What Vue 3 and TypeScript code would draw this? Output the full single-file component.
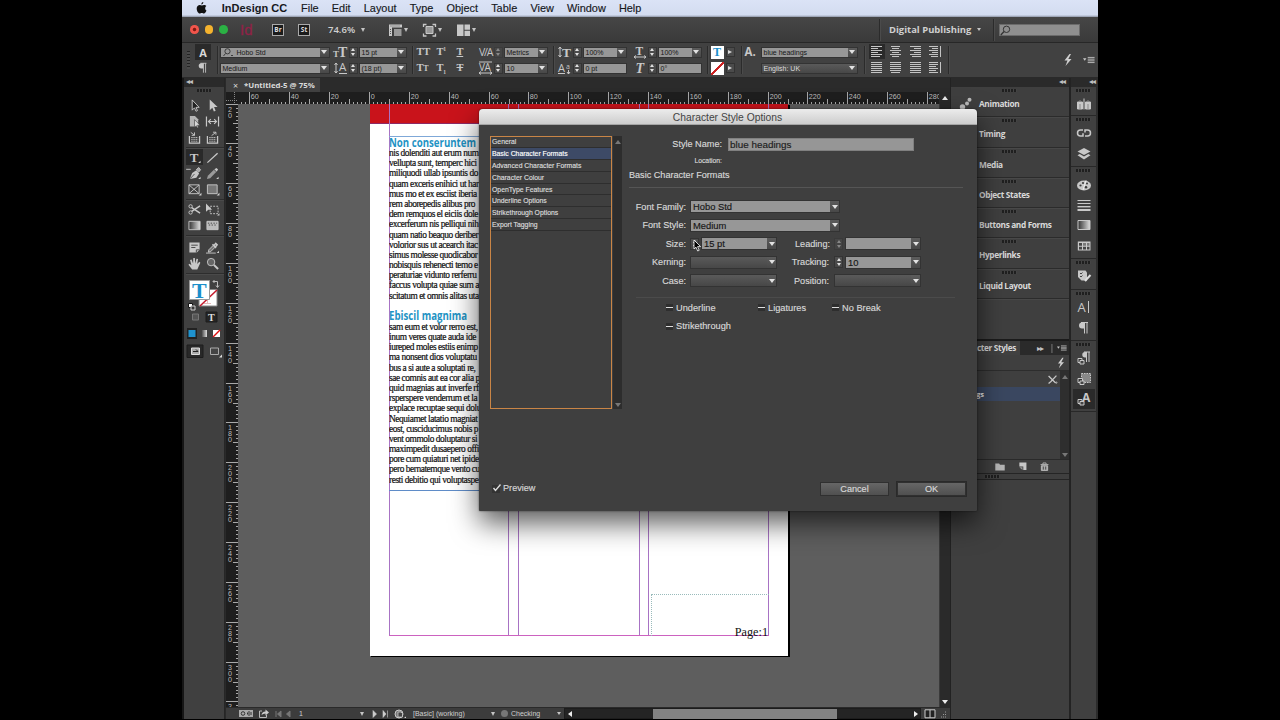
<script setup lang="ts">
interface Tick { p: number; len: number; label?: string }

const menus: string[] = ['File', 'Edit', 'Layout', 'Type', 'Object', 'Table', 'View', 'Window', 'Help']

const STEP = 3.986

function ticks(origin: number, size: number): Tick[] {
  const out: Tick[] = []
  for (let i = Math.ceil(-origin / STEP) - 1; origin + i * STEP < size; i++) {
    const major = i % 10 === 0
    out.push({
      p: Math.round(origin + i * STEP) + 0.5,
      len: major ? 12 : i % 5 === 0 ? 5 : 2,
      label: major ? String(Math.abs(i * 2)) : undefined,
    })
  }
  return out
}
const hTicks = ticks(131, 701)
const vTicks = ticks(-40.3, 603)
const fitting = (t: Tick): string[] => (t.label ?? '').split('').filter((_, i) => t.p + i * 6 < 600)

const para1: string[] = [
  'nis dolenditi aut erum num', 'vellupta sunt, temperc hici', 'miliquodi ullab ipsuntis do',
  'quam exceris enihici ut har', 'mus mo et ex esciist iberia', 'rem aborepedis alibus pro',
  'dem remquos el eiciis dole', 'excerferum nis pelliqui nih', 'quam natio beaquo deriber',
  'volorior sus ut acearch itac', 'simus molesse quodicabor', 'nobisquis rehenecti temo e',
  'peraturiae vidunto rerferru', 'faccus volupta quiae sum a', 'scitatum et omnis alitas uta',
]
const para2: string[] = [
  'sam eum et volor rerro est,', 'inum veres quate auda ide', 'iureped moles estiis enimp',
  'ma nonsent dios voluptatu', 'bus a si aute a soluptati re,', 'sae comnis aut ea cor alia p',
  'quid magnias aut inverfe rf', 'rsperspere venderrum et la', 'explace recuptae sequi dolu',
  'Nequiamet latatio magniat', 'eost, cusciducimus nobis p', 'vent ommolo doluptatur si',
  'maximpedit dusaepero offi', 'pore cum quiaturi net ipide', 'pero bernatemque vento cu',
  'resti debitio qui voluptaspe',
]

const categories: string[] = [
  'General', 'Basic Character Formats', 'Advanced Character Formats', 'Character Colour',
  'OpenType Features', 'Underline Options', 'Strikethrough Options', 'Export Tagging',
]
const panels: string[] = ['Animation', 'Timing', 'Media', 'Object States', 'Buttons and Forms', 'Hyperlinks', 'Liquid Layout']

const serif = 'font-family="Liberation Serif, serif" fill="#c8c8c8" stroke="none" font-weight="bold"'
const sans = 'font-family="Open Sans, sans-serif" fill="#c8c8c8" stroke="none"'

// 14 x 14 glyphs, light grey strokes unless a shape sets its own paint
const icons: Record<string, string> = {
  select: '<path d="M4.500 1V12L7 9.500l1.600 3.700 1.600-.7L8.600 9H12Z" fill="#222" stroke="#c8c8c8"/>',
  direct: '<path d="M4 .5V12L6.800 9.300l1.700 4.200 1.900-.8L8.700 8.600H12.500Z" fill="#c8c8c8" stroke="none"/>',
  page: '<path d="M2 1h5.500l3.500 3.500V12.500H2Z" fill="#b5b5b5" stroke="none"/><path d="M7 5v8.500l2-2 1 2.500 1.200-.5-1-2.500H13Z" fill="#d8d8d8" stroke="#333" stroke-width=".6"/>',
  gap: '<path d="M.5 1.500v11M13.500 1.500v11" stroke-width="1.300"/><path d="M3 7h8M5.200 4.500 2.700 7l2.500 2.500M8.800 4.500 11.300 7 8.800 9.500" stroke-width="1.200"/>',
  collect: '<path d="M1.500 5.500v7.500h11V5.500" stroke-width="1.300"/><path d="M3.500 7h7.500M3.500 9h7.500M3.500 11h7.500" stroke-dasharray="1.500 .8"/><path d="M3 1.500 7 4.500M7 1.500v3.200H4"/>',
  place: '<path d="M1.500 5.500v7.500h11V5.500" stroke-width="1.300"/><path d="M3.500 7h7.500M3.500 9h7.500M3.500 11h7.500" stroke-dasharray="1.500 .8"/><path d="M6 5 10.500 1.500M7.500 1.300h3.200V4"/>',
  type: `<text x="2" y="11.700" font-size="14" ${serif}>T</text><path d="M13.500 10.500v2.500H11Z" fill="#d0d0d0" stroke="none"/>`,
  line: '<path d="M1.500 12.500 12.500 2.500" stroke-width="1.400"/>',
  pen: '<path d="M2 13 4.500 6.500l4.500-3 3 3.500L9 11.500Z" fill="#c8c8c8" stroke="none"/><path d="M2.500 12.500 7 7.500" stroke="#333" stroke-width=".8"/><path d="m9 3 2.500-2.500 2 2.500-2 2.500ZM-2 2.500h5" fill="#aaa"/><path d="M13.500 10.500v2.500H11Z" fill="#d0d0d0" stroke="none"/>',
  pencil: '<path d="m1 13 1-3.500L8.500 3l2.500 2.500L4.500 12Z" fill="#9a9a9a" stroke="none"/><path d="m9 2.500 2.300-1.500 1.700 1.700-1.500 2.300Z" fill="#c8c8c8" stroke="none"/><path d="M13.500 10.500v2.500H11Z" fill="#d0d0d0" stroke="none"/>',
  frame: '<path d="M1 2h11v9.500H1ZM1 2l11 9.500M12 2 1 11.500"/><path d="M14.500 10.500v3h-3Z" fill="#d0d0d0" stroke="none"/>',
  rect: '<path d="M1.500 2h10.500v9.500H1.500Z" fill="#777"/><path d="M14.500 10.500v3h-3Z" fill="#d0d0d0" stroke="none"/>',
  scissors: '<path d="M13 3 4 9M13 11 4 5" stroke-width="1.600"/><circle cx="2.800" cy="3.600" r="1.800"/><circle cx="2.800" cy="10.200" r="1.800"/>',
  transform: '<path d="M4.500 3.500h8.500v8H4.500Z" stroke-dasharray="2 1.300"/><path d="M0 .5v9l2.500-2.200 4 0Z" fill="#c8c8c8" stroke="none"/><path d="M14.500 11v2.500h-2.500Z" fill="#d0d0d0" stroke="none"/>',
  gradient: '<path d="M1 2.500h12v9H1Z" fill="url(#grad)"/>',
  feather: '<path d="M1 2.500h12v9H1Z" fill="#bbb"/><path d="M2 4.500h10M3 6.500h9" stroke="#444" stroke-dasharray="1.500 1.500"/>',
  note: '<path d="M1.500 1.500h11v8L9.500 12.500h-8Z" fill="#c8c8c8" stroke="none"/><path d="M3.500 4.500h7M3.500 7h4.500" stroke="#444"/><path d="M9 12.500V9.500h3.500" stroke="#444"/>',
  dropper: '<path d="M2.500 12 3 9.500 8 4.500l2 2-5 5Z" fill="#777"/><path d="m7 3.500 4 4M8.500 5l2-2.500 1.500 1.500-2 2.500Z" stroke-width="1.600"/><path d="M0 13h10.500"/><path d="M14 10.500v2.500h-2.500Z" fill="#d0d0d0" stroke="none"/>',
  hand: '<path d="M4.500 13.500.5 8.300l1-1 2.200 1.700L2.200 3.200l1.600-.5L5.500 7 5.700 1h1.700L7.700 7l1.500-5.200 1.600.4-.9 5.400 2.300-2.400 1.100.9L10 13.500Z" fill="#c8c8c8" stroke="none"/>',
  zoom: '<circle cx="5.500" cy="5.500" r="4" fill="#666"/><path d="m8.500 8.500 4.500 4.500" stroke-width="2.200"/>',
  pages: '<path d="M.5 5v7h5V5ZM7 1.500v11M8.500 12V5h5v7Z" fill="#c8c8c8"/><path d="M3 5V3M11 5V3M3 7v5M11 7v5" stroke="#888"/>',
  link: '<path d="M6 4H3.500a3 3 0 0 0 0 6H6V7.200M8 10h2.500a3 3 0 0 0 0-6H8v2.500" stroke-width="1.500"/>',
  layers: '<path d="m7 1 6.500 3.500L7 8 .5 4.500Z" fill="#c8c8c8" stroke="none"/><path d="m.5 8.300 2.200-1.200L7 9.400l4.300-2.300 2.200 1.200L7 12.500Z" fill="#c8c8c8" stroke="none"/>',
  palette: '<ellipse cx="7" cy="7.500" rx="7" ry="5" fill="#c8c8c8" stroke="none"/><circle cx="3.500" cy="7.500" r="1.100" fill="#3b3b3b" stroke="none"/><circle cx="6" cy="5" r="1.100" fill="#3b3b3b" stroke="none"/><circle cx="9" cy="9.300" r="1.300" fill="#3b3b3b" stroke="none"/><circle cx="10" cy="5.500" r="1" fill="#3b3b3b" stroke="none"/><path d="M6 12 9 2.500" stroke="#eee"/>',
  stroke: '<path d="M.5 2.500h13M.5 5.500h13" stroke-width="1"/><path d="M.5 8.700h13" stroke-width="1.400"/><path d="M.5 12h13" stroke-width="2"/>',
  swatches: '<path d="M.8 2.500H13.500v9H.8Z" fill="#c8c8c8" stroke="none"/><path d="M2 4h3v2.800H2ZM2 7.800h3v2.700H2ZM6 7.800h3v2.700H6ZM10 7.800h2.500v2.700H10Z" fill="#444" stroke="none"/><path d="M6 4h3v2.800H6ZM10 4h2.500v2.800H10Z" fill="#777" stroke="none"/>',
  effects: '<path d="M1 1.500h7.500l1.500 2v8H4.500L1 8Z" fill="#c8c8c8" stroke="none"/><path d="m3 4 1 1 1.500-1.500M3 7l1 1 1.500-1.500" stroke="#444"/><path d="m8 12 5.500-6" stroke="#ddd" stroke-width="2"/>',
  charA: `<text x=".5" y="11.500" font-size="13" ${sans}>A</text><path d="M11.500 1v12" />`,
  para: '<path d="M7.500 1.500v11M10 1.500v11M4 1.500h7" /><path d="M7.500 1.500H5a3 3 0 0 0 0 6h2.500Z" fill="#c8c8c8" stroke="none"/>',
  paraStyle: '<path d="M9.500 1v10M12 1v10M7 1h6"/><path d="M9.500 1H8a2.700 2.700 0 0 0 0 5.400h1.500Z" fill="#c8c8c8" stroke="none"/><path d="M1 7.500h4v4H1Z" fill="#333"/><path d="M3 9.500h4v3.500H3Z" fill="#444"/>',
  objStyle: '<path d="M4.500 1.500h9v9h-9Z" fill="#888" stroke-dasharray="1.500 1"/><path d="M1 6.500h4.500v4H1Z" fill="#333"/><path d="M3 9h4v3.500H3Z" fill="#444"/>',
  charStyle: `<text x="5" y="10" font-size="12" ${sans} font-weight="bold">A</text><path d="M1 7.500h4v4H1Z" fill="#333"/><path d="M3 9.500h4v3.500H3Z" fill="#444"/>`,
  anim: '<circle cx="3.500" cy="10" r="2.700" fill="#bbb" stroke="none"/><circle cx="8" cy="6.500" r="2" fill="#bbb" stroke="none"/><circle cx="10.500" cy="2.700" r="2" fill="#bbb" stroke="none"/>',
  bolt: '<path d="M8.500 1 3.500 7.500h3L4.500 13l6-7H7.300L10 1Z" fill="#d0d0d0" stroke="none"/>',
  menu: '<path d="M5.500 4h8M5.500 6h8M5.500 8h8M5.500 10h8"/><path d="M0 5h4L2 8Z" fill="#c8c8c8" stroke="none"/>',
  folder: '<path d="M1.500 3H6l1 1.500h5.500V11h-11Z" fill="#b5b5b5" stroke="none"/>',
  newItem: '<path d="M3 2h9v9.500H8V7H3Z" fill="#c8c8c8" stroke="none"/><path d="M3 8h4v3.500Z" fill="#999" stroke="none"/>',
  trash: '<path d="M2 4.500h10M5 4V2.500h4V4"/><path d="M3 6h8v6H3Z" fill="#aaa"/><path d="M5.500 7v4M8.500 7v4" stroke="#333"/>',
  noStyle: '<path d="m2 2.500 9 9M12 2 5 9.500l-3 2.500" stroke-width="1.600"/><circle cx="12" cy="11" r=".8"/>',
  viewOpts: '<path d="M.5 1.500h13v3H3.500V13H.5Z" fill="#c8c8c8" stroke="none"/><path d="M2 3h10M2 6v6" stroke="#555" stroke-dasharray="1 1"/><path d="M5.500 6h7.500v7H5.500Z" fill="#999" stroke="none"/>',
  screen: '<path d="M3.500 3.500h7v7h-7Z" fill="#999"/><path d="M1 4V1.500h3M10 1.500h3V4M1 10.500V13h3M13 10.500V13h-3" stroke-width="1.300"/>',
  arrange: '<path d="M.5 1.500h6.500v11.500H.5ZM8 1.500h5.500v5.200H8ZM8 7.700h5.500v5.300H8Z" fill="#c8c8c8" stroke="none"/>',
  fontSize: `<text x="-1" y="12" font-size="9" ${serif}>T</text><text x="4" y="12" font-size="14" ${serif} font-weight="normal">T</text>`,
  leading: `<text x="5" y="10" font-size="11.500" ${sans}>A</text><path d="M5 12.500h8M2 2v10M.5 4 2 2l1.500 2M.5 10 2 12l1.500-2"/>`,
  kern: `<text x="0" y="10.500" font-size="10.500" letter-spacing="-1.200" ${sans}>V/A</text>`,
  track: `<text x="0" y="9.500" font-size="10" letter-spacing="-.5" ${sans}>VA</text><path d="M0 12h13M2 10.500 0 12l2 1.500M11 10.500l2 1.500-2 1.500M0 1h13"/>`,
  vscale: `<text x="4" y="12" font-size="13.500" ${serif}>T</text><path d="M2 2v10M.5 4 2 2l1.500 2M.5 10 2 12l1.500-2"/>`,
  hscale: `<text x="2.500" y="9.500" font-size="11.500" ${serif}>T</text><path d="M1 12h12M3 10.500 1 12l2 1.500M11 10.500l2 1.500-2 1.500"/>`,
  baseline: `<text x="0" y="11" font-size="11" ${sans}>A</text><text x="8" y="8" font-size="7" ${sans}>a</text><path d="M0 12.500h7M10.500 9v4M9 11l1.500 2 1.500-2"/>`,
  skew: `<text x="2.500" y="12" font-size="14" font-style="italic" ${serif}>T</text>`,
}

const tools: string[][] = [
  ['select', 'direct', 'page', 'gap', 'collect', 'place'],
  ['type', 'line', 'pen', 'pencil', 'frame', 'rect'],
  ['scissors', 'transform', 'gradient', 'feather'],
  ['note', 'dropper', 'hand', 'zoom'],
]
const dock: string[][] = [
  ['pages'], ['link', 'layers'], ['palette', 'stroke', 'gradient', 'swatches'], ['effects'],
  ['charA', 'para'], ['paraStyle', 'objStyle', 'charStyle'],
]

// each row of an alignment glyph is [left, right] on a 12px wide grid
type Row = [number, number]
const full: Row = [0, 11]
const bars = (rows: Row[]): string => rows.map(([a, b], i) => `M${a} ${i * 2 + 0.5}H${b}`).join('')
const aligns: string[] = [
  bars([full, [0, 7], full, [0, 7], full, [0, 9]]),
  bars([[1, 10], [2, 9], full, [2, 9], full, [2, 9]]),
  bars([full, [4, 11], full, [4, 11], full, [2, 11]]),
  bars([[0, 9], [3, 9], [0, 9], [3, 9], [0, 9], [2, 9]]) + 'M11.500 0v11',
  bars([full, full, full, full, full, [0, 11]]),
  bars([full, full, full, full, full, [1, 10]]),
  bars([full, full, full, full, full, full]),
  bars([[0, 9], [0, 9], [0, 7], [0, 9], [0, 7], [0, 9]]) + 'M11.500 0v11',
]
</script>

<template>
  <div class="stage">
    <svg class="defs" width="0" height="0"><defs><linearGradient id="grad"><stop offset="0" stop-color="#333" /><stop offset="1" stop-color="#ddd" /></linearGradient></defs></svg>
    <div class="screen">
      <nav class="menubar">
        <svg class="apple" width="11" height="12" viewBox="0 0 11 12"><path d="M7.300 0c.1 1.300-.9 2.400-2 2.500C5.200 1.300 6.200.2 7.300 0ZM9.200 6.200c0-1.200.7-1.800 1.200-2.100-.7-1-1.700-1.100-2.300-1.100-.9 0-1.600.5-2.200.5S4.600 3 3.800 3C2.200 3 .7 4.300.7 6.600c0 2.400 1.600 5 2.900 5 .8 0 1.200-.5 2.200-.5s1.300.5 2.100.5c1.100 0 2.100-1.700 2.600-3.100-.8-.4-1.300-1.200-1.300-2.300Z" fill="#111" /></svg>
        <b>InDesign CC</b>
        <span v-for="m in menus" :key="m">{{ m }}</span>
      </nav>

      <header class="appbar">
        <div class="lights"><i class="red" /><i class="amber" /><i class="green" /></div>
        <span class="id">Id</span>
        <span class="chip br">Br</span>
        <span class="chip st">St</span>
        <span class="pct">74.6%</span><i class="tri" />
        <template v-for="n in ['viewOpts', 'screen', 'arrange']" :key="n">
          <svg class="ic big" viewBox="0 0 14 14" v-html="icons[n]" /><i class="tri" />
        </template>
        <i class="sep push" />
        <span class="ws">Digital Publishing</span><i class="tri small" />
        <i class="sep" />
        <div class="search"><svg width="12" height="11" viewBox="0 0 12 11"><circle cx="6.500" cy="4.300" r="3.200" fill="none" stroke="#333" /><path d="M4 6.500.8 10" stroke="#333" stroke-width="1.300" /></svg></div>
      </header>

      <section class="control">
        <i class="vgrip" />
        <div class="col mode"><span class="on">A</span><span><svg class="ic s12" viewBox="0 0 14 14" v-html="icons.para" /></span></div>
        <i class="sep" />
        <div class="col fam">
          <div class="sel"><span class="v"><svg width="11" height="9" viewBox="0 0 11 9"><circle cx="4.500" cy="3.300" r="2.600" fill="none" stroke="#333" stroke-width=".9" /><path d="M2.500 5.500.5 8M8 7.500h2" stroke="#333" stroke-width=".9" /></svg>Hobo Std</span><i class="dd" /></div>
          <div class="sel"><span class="v">Medium</span><i class="dd" /></div>
        </div>
        <div class="col ics"><svg class="ic" viewBox="0 0 14 14" v-html="icons.fontSize" /><svg class="ic" viewBox="0 0 14 14" v-html="icons.leading" /></div>
        <div class="col sp"><i class="spin" /><i class="spin" /></div>
        <div class="col f47"><div class="sel"><span class="v">15 pt</span><i class="dd" /></div><div class="sel"><span class="v">(18 pt)</span><i class="dd" /></div></div>
        <i class="sep" />
        <div class="caps">
          <span>TT</span><span>T<sup>1</sup></span><span class="under">T</span>
          <span>T<small>T</small></span><span>T<sub>1</sub></span><span class="strike">T</span>
        </div>
        <div class="col ics"><svg class="ic" viewBox="0 0 14 14" v-html="icons.kern" /><svg class="ic" viewBox="0 0 14 14" v-html="icons.track" /></div>
        <div class="col sp"><i class="spin dim" /><i class="spin" /></div>
        <div class="col f43"><div class="sel"><span class="v">Metrics</span><i class="dd" /></div><div class="sel"><span class="v">10</span><i class="dd" /></div></div>
        <i class="sep" />
        <div class="col ics"><svg class="ic" viewBox="0 0 14 14" v-html="icons.vscale" /><svg class="ic" viewBox="0 0 14 14" v-html="icons.baseline" /></div>
        <div class="col sp"><i class="spin" /><i class="spin" /></div>
        <div class="col f43"><div class="sel"><span class="v">100%</span><i class="dd" /></div><div class="sel"><span class="v">0 pt</span></div></div>
        <div class="col ics second"><svg class="ic" viewBox="0 0 14 14" v-html="icons.hscale" /><svg class="ic" viewBox="0 0 14 14" v-html="icons.skew" /></div>
        <div class="col sp"><i class="spin" /><i class="spin" /></div>
        <div class="col f43"><div class="sel"><span class="v">100%</span><i class="dd" /></div><div class="sel"><span class="v">0°</span></div></div>
        <i class="sep" />
        <div class="col sw">
          <div><b class="fillt">T</b><i class="play" /></div>
          <div><b class="none" /><i class="play" /></div>
        </div>
        <i class="sep" />
        <span class="adot">A.</span>
        <div class="col f97"><div class="sel"><span class="v">blue headings</span><i class="dd" /></div><div class="sel dark"><span class="v">English: UK</span><i class="dd" /></div></div>
        <i class="sep" />
        <div class="aligns"><span v-for="(d, i) in aligns" :key="i" :class="{ on: i === 0 }"><svg width="12" height="11" viewBox="0 0 12 11"><path :d="d" stroke="#c4c4c4" fill="none" /></svg></span></div>
        <i class="sep" />
        <svg class="ic bolt" viewBox="0 0 14 14" v-html="icons.bolt" />
        <svg class="ic cmenu" viewBox="0 0 14 14" v-html="icons.menu" />
      </section>

      <main class="work">
        <aside class="tools">
          <div class="strip left">◂◂</div>
          <i class="grip" />
          <div v-for="(g, gi) in tools" :key="gi" class="tgroup">
            <span v-for="t in g" :key="t" :class="{ on: t === 'type' }"><svg class="ic" viewBox="0 0 14 14" v-html="icons[t]" /></span>
          </div>
          <svg class="swatch" width="40" height="85" viewBox="0 0 40 85">
            <path d="M14 11.500h18v16.500H14Z" fill="#fff" stroke="#888" /><path d="M19 25.500h7M22.500 25V17" stroke="#e6b9b9" fill="none" /><path d="M15 28 32 12" stroke="#c41b2c" stroke-width="1.600" />
            <path d="M4.500 2.500h20v19h-20Z" fill="#fff" stroke="#999" />
            <text x="7" y="19.500" font-family="Liberation Serif, serif" font-weight="bold" font-size="22" fill="#1b8fcb">T</text>
            <path d="M28 3.500h4.500V9M29.500 2 28 3.500 29.500 5M31 7.500l1.500 2L34 7.500" fill="none" stroke="#bbb" />
            <path d="M3.500 25.500h4v4h-4Z" fill="#fff" stroke="#111" /><path d="M6 28h4v4H6Z" fill="#3a3a3a" stroke="#ccc" />
            <g transform="translate(-1 -1.500)">
              <path d="M8.500 37.500h6v6h-6Z" fill="#555" stroke="#777" />
              <path d="M22 35.500h11v10H22Z" fill="#252525" stroke="#1c1c1c" /><text x="24" y="44" font-family="Liberation Serif, serif" font-weight="bold" font-size="10" fill="#ddd">T</text>
              <path d="M3 51.500h10v11H3Z" fill="#222" /><path d="M4.500 53.500h7v7h-7Z" fill="#1f93cf" />
              <path d="M17 53.500h6v7h-6Z" fill="url(#grad)" /><path d="M29 53.500h7v7h-7Z" fill="#fff" /><path d="M29 60.500 36 53.500" stroke="#d11" stroke-width="1.500" />
              <path d="M3 68.500h16v12.500H3Z" fill="#282828" stroke="#1c1c1c" /><path d="M7.500 71.500h8v6.500h-8Z" fill="#aaa" stroke="#ddd" /><path d="M9 75h5l-2-2" fill="none" stroke="#222" />
              <path d="M26.500 71.500h8v6.500h-8Z" fill="#444" stroke="#aaa" /><path d="M38 78v3h-3Z" fill="#ddd" />
            </g>
          </svg>
        </aside>

        <section class="doc">
          <div class="tabs"><div class="tab"><i>×</i>*Untitled-5 @ 75%</div></div>
          <div class="view">
            <div class="corner"><svg width="12" height="12" viewBox="0 0 12 12"><path d="M0 8.500h12M8.500 0v12" stroke="#888" stroke-dasharray="1 1" /></svg></div>
            <svg class="hruler" width="701" height="12" viewBox="0 0 701 12">
              <g v-for="t in hTicks" :key="t.p"><path :d="`M${t.p} ${12 - t.len}V12`" stroke="#a8a8a8" /><text v-if="t.label" :x="t.p + 1.2" y="7">{{ t.label }}</text></g>
            </svg>
            <div class="up"><i /></div>
            <svg class="vruler" width="12" height="603" viewBox="0 0 12 603">
              <g v-for="t in vTicks" :key="t.p"><path :d="`M${12 - t.len} ${t.p}H12`" stroke="#a8a8a8" /><text v-for="(c, ci) in fitting(t)" :key="ci" x="2" :y="t.p + 7 + ci * 6">{{ c }}</text></g>
            </svg>
            <div class="canvas">
              <div class="page">
                <div class="band" />
                <i class="guide v1" /><i class="guide v2" /><i class="guide v3" /><i class="guide v4" /><i class="guide v5" /><i class="guide v6" /><i class="guide hb" />
                <div class="frame">
                  <h2>Non conseruntem</h2>
                  <p v-for="l in para1" :key="l">{{ l }}</p>
                  <h2 class="h2b">Ebiscil magnima</h2>
                  <p v-for="l in para2" :key="l">{{ l }}</p>
                </div>
                <div class="folio"><span>Page:1</span></div>
              </div>
            </div>
            <div class="vscroll"><i /></div>
          </div>
          <footer class="status">
            <svg width="14" height="9" viewBox="0 0 14 9"><path d="M0 1h14v7H0Z" fill="#aaa" /><circle cx="4" cy="4.500" r="1.800" fill="none" stroke="#333" /><path d="M10 2v5M8.500 3.500v2M12 3v3" stroke="#333" /></svg>
            <svg class="share" width="10" height="9" viewBox="0 0 10 9"><path d="M3 2H.5v6.500h7V6" fill="none" stroke="#bbb" /><path d="M2.500 6Q3 2.500 6.500 2.500V.5L10 3.500 6.500 6.500V4.500Q4 4.500 2.500 6Z" fill="#ccc" /></svg>
            <svg class="nav" width="16" height="8" viewBox="0 0 16 8"><path d="M1 1v6M6 1 2.500 4 6 7ZM15 1l-3.500 3L15 7Z" fill="#777" stroke="#777" /></svg>
            <span class="pno">1</span><i class="tri" />
            <svg class="nav2" width="16" height="8" viewBox="0 0 16 8"><path d="M1 .5 4.500 4 1 7.500ZM11 .5 14 4l-3 3.500ZM15.500.5v7" fill="#ccc" stroke="#ccc" stroke-width=".6" /></svg>
            <svg class="pre" width="12" height="10" viewBox="0 0 12 10"><circle cx="5" cy="5" r="4" fill="#777" stroke="#ccc" /><path d="M4 3h3l1.500 1.500V8H4Z" fill="#444" stroke="#ddd" stroke-width=".7" /><path d="M10 9h2V7.500Z" fill="#ddd" /></svg>
            <span class="basic">[Basic] (working)</span><i class="tri" />
            <i class="ball" /><span class="chk">Checking</span><i class="tri small" />
            <div class="hscroll"><i class="la" /><i class="thumb" /><i class="ra" /></div>
            <svg class="split" width="24" height="10" viewBox="0 0 24 10"><path d="M1 .8h10v8H1ZM6 .8v8" fill="#222" stroke="#ccc" /><path d="M21 3h1M19 5.500h1M21 5.500h1M17 8h1M19 8h1M21 8h1" stroke="#999" /></svg>
          </footer>
        </section>

        <aside class="panels">
          <div class="strip">◂◂</div>
          <div v-for="p in panels" :key="p" class="panel"><i class="grip" /><div><svg class="ic" viewBox="0 0 14 14" v-html="p === 'Animation' ? icons.anim : ''" /><span>{{ p }}</span></div></div>
          <div class="blank" />
          <div class="ptabs"><div class="ptab">Character Styles</div><span class="ff">▸▸</span><i class="sep" /><svg class="ic s10" viewBox="0 0 14 14" v-html="icons.menu" /></div>
          <div class="prow"><svg class="ic s12" viewBox="0 0 14 14" v-html="icons.bolt" /></div>
          <div class="plist">
            <div class="rows"><div class="pr1"><svg class="ic s11" viewBox="0 0 14 14" v-html="icons.noStyle" /></div><div class="pr2"><span>blue headings</span></div></div>
            <div class="psc"><i class="su" /><i class="sd" /></div>
          </div>
          <div class="pfoot"><svg class="ic s12" viewBox="0 0 14 14" v-html="icons.folder" /><svg class="ic s11" viewBox="0 0 14 14" v-html="icons.newItem" /><svg class="ic s11" viewBox="0 0 14 14" v-html="icons.trash" /></div>
          <div class="pgrip"><i class="grip" /></div>
        </aside>

        <aside class="dock">
          <div class="strip">◂◂</div>
          <div v-for="(g, gi) in dock" :key="gi" class="dgroup">
            <i class="grip" />
            <span v-for="d in g" :key="d" :class="{ on: d === 'charStyle' }"><svg class="ic" viewBox="0 0 14 14" v-html="icons[d]" /></span>
          </div>
        </aside>
      </main>
    </div>

    <div class="dialog">
      <div class="title">Character Style Options</div>
      <div class="body">
        <div class="cats">
          <ul><li v-for="c in categories" :key="c" :class="{ on: c === 'Basic Character Formats' }">{{ c }}</li></ul>
          <div class="lsc"><i class="su" /><i class="sd" /></div>
        </div>
        <div class="form">
          <div class="name"><label>Style Name:</label><span class="inp">blue headings</span></div>
          <div class="loc">Location:</div>
          <h3>Basic Character Formats</h3>
          <hr>
          <div class="fields">
            <div class="row"><label>Font Family:</label><div class="sel w150"><span class="v">Hobo Std</span><i class="dd" /></div></div>
            <div class="row"><label>Font Style:</label><div class="sel w150"><span class="v">Medium</span><i class="dd" /></div></div>
            <div class="row"><label>Size:</label><i class="spin" /><div class="sel w75"><span class="v">15 pt</span><i class="dd" /></div><label class="l2">Leading:</label><i class="spin dim" /><div class="sel w75"><span class="v" /><i class="dd" /></div></div>
            <div class="row"><label>Kerning:</label><div class="sel dark w87"><span class="v" /><i class="dd" /></div><label class="l2 near">Tracking:</label><i class="spin" /><div class="sel w75"><span class="v">10</span><i class="dd" /></div></div>
            <div class="row"><label>Case:</label><div class="sel dark w87"><span class="v" /><i class="dd" /></div><label class="l2 near">Position:</label><div class="sel dark w87"><span class="v" /><i class="dd" /></div></div>
          </div>
          <hr class="h2r">
          <div class="checks"><span><i />Underline</span><span><i />Ligatures</span><span><i />No Break</span><span><i />Strikethrough</span></div>
        </div>
      </div>
      <div class="foot">
        <span class="prev"><svg width="10" height="9" viewBox="0 0 10 9"><path d="M0 1h8v8H0Z" fill="#333" /><path d="m1.500 4 2 2.500L8.500.5" fill="none" stroke="#ddd" stroke-width="1.400" /></svg>Preview</span>
        <span class="btn">Cancel</span><span class="btn ok">OK</span>
      </div>
    </div>
    <svg class="cursor" width="9" height="13" viewBox="0 0 9 13"><path d="M1 1v9l2-1.800L4.700 12l1.500-.7L4.600 7.600h3Z" fill="#000" stroke="#fff" stroke-width=".8" /></svg>
  </div>
</template>

<style>
html, body { background: #000; overflow: hidden; }
</style>

<style scoped>
.stage { position: relative; width: 1280px; height: 720px; background: #000; overflow: hidden; font-family: "Liberation Sans", sans-serif; font-size: 9.150px; color: #d8d8d8; }
.stage * { box-sizing: border-box; }
.defs { position: absolute; }
i { font-style: normal; display: block; flex: none; }
svg { display: block; flex: none; overflow: visible; }
.screen { margin-left: 182px; width: 916px; height: 719px; display: flex; flex-direction: column; background: #3e3e3e; }
.ic { width: 14px; height: 14px; fill: none; stroke: #c8c8c8; stroke-width: 1; }
.s12 { width: 12px; height: 12px; } .s11 { width: 11px; height: 11px; } .s10 { width: 10px; height: 10px; }
.tri { width: 0; height: 0; border: 2.500px solid transparent; border-top: 4px solid #c4c4c4; border-bottom: 0; }
.tri.small { border-width: 3px 2px 0; }
.sep { width: 1px; background: #2b2b2b; box-shadow: 1px 0 #4b4b4b; }

.menubar { height: 17px; background: linear-gradient(#dbe3f6, #d3dcf0 88%, #8f96a6); color: #16181c; display: flex; align-items: center; gap: 13.200px; font-size: 10.900px; padding: 0 0 1px 14px; -webkit-text-stroke: .15px #16181c; }
.apple { margin-right: 1.500px; }
.menubar b { font-size: 11px; -webkit-text-stroke: 0; margin-right: .8px; }

.appbar { height: 26px; background: linear-gradient(#464646, #3a3a3a); display: flex; align-items: center; border-bottom: 1px solid #272727; padding-left: 8px; }
.lights { display: flex; gap: 6px; width: 50px; }
.lights i { width: 8.500px; height: 8.500px; border-radius: 50%; }
.red { background: radial-gradient(circle, #7d1a14 20%, #f2554b 35%); } .amber { background: #f5b32e; } .green { background: #2bb144; }
.id { width: 32px; color: #8f2347; font-size: 15px; -webkit-text-stroke: .3px #8f2347; }
.chip { width: 12px; height: 12px; background: #1b1b1b; border: 1px solid #aaa; font: bold 6.500px/10px "Open Sans", sans-serif; text-align: center; color: #ddd; }
.st { margin-left: 14px; }
.pct { margin-left: 18px; width: 33px; font: 600 9.500px "Open Sans", sans-serif; color: #d0d0d0; }
.big { margin-left: 14px; width: 15px; height: 14px; margin-right: 1px; }
.pct + .tri + .big { margin-left: 23px; }
.appbar .sep { height: 22px; }
.push { margin-left: auto; }
.ws { margin-left: 9px; width: 88px; font: bold 9.450px "Open Sans", sans-serif; color: #cfcfcf; white-space: nowrap; }
.ws + .tri { margin-right: 12px; }
.search { width: 81px; height: 12px; margin: 0 18px 0 5px; background: #8f8f8f; border: 1px solid #6b6b6b; }

.control { height: 35px; background: #414141; display: flex; align-items: center; padding-left: 2px; border-bottom: 1px solid #2a2a2a; }
.control > .sep { height: 28px; }
.vgrip { width: 3px; height: 18px; margin: 0 5px 0 3px; background: repeating-linear-gradient(#222 0 1px, #4a4a4a 1px 3px); }
.col { display: flex; flex-direction: column; gap: 5px; flex: none; }
.mode { width: 22px; gap: 0; }
.mode span { width: 16px; height: 16px; display: flex; align-items: center; justify-content: center; font: bold 11px "Open Sans", sans-serif; }
.mode .on { background: #2a2a2a; }
.fam { width: 110px; margin-left: 1.500px; }
.sel { display: flex; height: 11px; border: 1px solid #333; background: #979797; color: #161616; font-size: 7px; }
.sel .v { flex: 1; display: flex; align-items: center; padding-left: 2px; white-space: nowrap; overflow: hidden; }
.dd { width: 9px; height: 100%; background: linear-gradient(#5c5c5c, #484848); display: flex; align-items: center; justify-content: center; }
.dd::after { content: ""; border: 3px solid transparent; border-top: 4px solid #e2e2e2; border-bottom: 0; }
.sel.dark { background: linear-gradient(#5a5a5a, #474747); color: #ddd; }
.sel .v svg { margin-right: 3px; }
.ics { width: 16px; gap: 2px; padding-left: 1px; margin-left: 3px; }
.ics.second { margin-left: 5px; }
.sp { width: 10px; }
.spin { width: 9px; height: 11px; background: linear-gradient(#505050, #464646); border: 1px solid #343434; display: flex; flex-direction: column; align-items: center; justify-content: center; gap: 2px; }
.spin::before { content: ""; border: 2.500px solid transparent; border-bottom: 3px solid #e0e0e0; border-top: 0; }
.spin::after { content: ""; border: 2.500px solid transparent; border-top: 3px solid #e0e0e0; border-bottom: 0; }
.spin.dim { opacity: .45; }
.f47 { width: 48px; margin-right: 5px; } .f43 { width: 44px; } .f97 { width: 97px; }
.f43 + .sep { margin-left: 5px; }
.caps { display: grid; grid-template-columns: 20px 20px 16px; grid-template-rows: 16px 16px; margin-left: 4px; width: 58px; font: bold 10.500px/16px "Liberation Serif", serif; color: #c8c8c8; }
.caps span { white-space: nowrap; letter-spacing: -.3px; }
.caps sup, .caps sub { font-size: 5.500px; line-height: 0; } .caps small { font-size: 8px; }
.under { text-decoration: underline; } .strike { text-decoration: line-through; }
.sw { margin-left: 3px; width: 30px; gap: 3px; }
.sw div { display: flex; gap: 2px; align-items: center; }
.fillt, .none { width: 13px; height: 13px; background: #fff; color: #1b8fcb; font: bold 12px/13px "Liberation Serif", serif; text-align: center; }
.none { background: linear-gradient(135deg, #fff 45%, #c22 45% 56%, #fff 56%); }
.play { width: 9px; height: 10px; background: #4b4b4b; border: 1px solid #333; display: flex; align-items: center; justify-content: center; }
.play::after { content: ""; border: 2.500px solid transparent; border-left: 4px solid #ddd; border-right: 0; }
.adot { width: 19px; padding-left: 3px; margin-top: -18px; font: bold 11.500px "Open Sans", sans-serif; color: #c8c8c8; }
.f97 + .sep { margin-left: 6px; }
.aligns { display: grid; grid-template-columns: repeat(4, 19.500px); grid-template-rows: 16px 16px; width: 83px; padding-left: 4px; }
.aligns span { width: 16px; height: 15px; display: flex; align-items: center; justify-content: center; }
.aligns .on { background: #2a2a2a; }
.bolt { margin-left: 112px; } .cmenu { margin-left: 8px; width: 12px; height: 12px; }

.work { flex: 1; display: flex; min-height: 0; }
.strip { height: 9px; background: #2a2a2a; color: #c0c0c0; font: 8px/8px "DejaVu Sans", sans-serif; letter-spacing: -1px; text-align: right; padding-right: 4px; }
.strip.left { text-align: left; padding-left: 2px; }
.grip { width: 15px; height: 3px; background: repeating-linear-gradient(90deg, #1f1f1f 0 2px, #444 2px 3px); }
.tools { width: 43px; background: #404040; border-right: 1px solid #262626; padding-left: 2px; border-left: 2px solid #161616; }
.tools .strip { margin-left: -2px; }
.tools > .grip { margin: 2px 0 4px 11px; }
.tgroup { display: grid; grid-template-columns: 18px 18px; grid-auto-rows: 16px; border-bottom: 1px solid #2d2d2d; padding: 1px 0 2px; box-shadow: 0 1px #4a4a4a; }
.tgroup span { width: 17px; height: 16px; display: flex; align-items: center; justify-content: center; }
.tgroup .ic { width: 13px; height: 13px; }
.tgroup span.on { background: #292929; }
.tgroup:nth-of-type(5) { padding-top: 3px; }
.swatch { margin: 4px 0 0 -1px; }

.doc { width: 725px; display: flex; flex-direction: column; background: #2a2a2a; padding-left: 1px; }
.tabs { height: 14px; background: #2b2b2b; }
.tab { width: 94px; height: 14px; background: #404040; font: bold 7.850px/15px "Open Sans", sans-serif; color: #dadada; display: flex; padding-left: 7px; white-space: nowrap; }
.tab i { width: 11px; font-weight: 400; font-size: 9px; }
.view { flex: 1; display: grid; grid-template-columns: 12px 701px 11px; grid-template-rows: 12px 1fr; min-height: 0; }
.hruler, .vruler, .corner { background: #1e1e1e; overflow: hidden; }
.hruler text, .vruler text { font-size: 7.200px; fill: #bcbcbc; }
.up, .vscroll { background: #2a2a2a; display: flex; justify-content: center; }
.up i { border: 3px solid transparent; border-bottom: 4px solid #eee; border-top: 0; margin-top: 4px; height: 0; }
.vscroll { align-items: flex-end; border-left: 1px solid #3a3a3a; }
.vscroll i { border: 3px solid transparent; border-top: 4px solid #eee; border-bottom: 0; margin-bottom: 3px; }
.canvas { background: #5e5e5e; position: relative; overflow: hidden; }
.page { position: absolute; left: 132px; top: 0; width: 418px; height: 552px; background: #fff; box-shadow: 1px 1px #000, 2px 1px #000; }
.band { height: 20px; background: #c9131b; border-bottom: 1px solid #8c2a66; }
.guide { position: absolute; width: 1px; top: 0; height: 532px; background: #a873c4; }
.v1 { left: 19px; } .v2 { left: 138px; } .v3 { left: 148px; } .v4 { left: 269px; } .v5 { left: 278px; } .v6 { left: 398px; }
.guide.hb { left: 19px; top: 531px; width: 380px; height: 1px; background: #cc62c0; }
.frame { position: absolute; left: 19px; top: 32px; width: 120px; height: 355px; border-top: 1px solid #7fa8d8; border-bottom: 1px solid #5f8cc8; overflow: hidden; }
h2 { margin: 0; font: bold 12px/11px "Open Sans", sans-serif; color: #1f93c4; white-space: nowrap; transform: scaleX(.805); transform-origin: 0 0; }
.frame p { margin: 0; font: 9.400px/10.180px "Liberation Serif", serif; letter-spacing: -.44px; color: #111; white-space: nowrap; -webkit-text-stroke: .2px #111; }
.h2b { margin-top: 9px; height: 12px; }
.folio { position: absolute; left: 281px; top: 490px; width: 118px; height: 42px; border: 1px dotted #9bb; border-right: 0; border-bottom: 0; text-align: right; display: flex; justify-content: flex-end; align-items: flex-end; font: 12.200px/13px "Liberation Serif", serif; color: #111; }
.folio span { margin: 0 1px -3px 0; }

.status { height: 12px; background: #3c3c3c; display: flex; align-items: center; font-size: 7px; color: #cfcfcf; padding-left: 13px; border-top: 1px solid #2a2a2a; white-space: nowrap; }
.share { margin-left: 6px; } .nav { margin-left: 6px; } .pno { margin-left: 8px; width: 61px; }
.nav2 { margin-left: 8px; } .pre { margin-left: 6px; } .basic { margin-left: 7px; width: 78px; }
.ball { width: 7px; height: 7px; border-radius: 50%; background: #777; margin: 0 3px 0 6px; } .chk { width: 46px; }
.hscroll { margin-left: 3px; width: 357px; height: 11px; background: #242424; display: flex; align-items: center; border: 1px solid #1c1c1c; }
.la { border: 3.500px solid transparent; border-right: 4px solid #eee; border-left: 0; margin-left: 3px; }
.thumb { width: 184px; height: 10px; background: #838383; margin-left: 81px; }
.ra { border: 3.500px solid transparent; border-left: 4px solid #eee; border-right: 0; margin-left: 77px; }
.split { margin-left: 3px; }

.panels { width: 119px; background: #3f3f3f; border-left: 1px solid #222; }
.panel { height: 30.300px; border-bottom: 1px solid #2b2b2b; box-shadow: 0 1px #484848; }
.panel .grip { margin: 0 0 0 51px; position: relative; top: 2px; }
.panel div { height: 24px; display: flex; align-items: center; padding-left: 8px; margin-top: 2px; }
.panel span { margin-left: 6px; font: bold 8.300px/12px "Open Sans", sans-serif; letter-spacing: -.36px; color: #dadada; white-space: nowrap; }
.blank { height: 42px; border-bottom: 2px solid #1b1b1b; }
.ptabs { height: 14px; background: #2a2a2a; display: flex; align-items: center; }
.ptab { width: 69px; height: 14px; background: #414141; font: bold 8.200px/14px "Open Sans", sans-serif; letter-spacing: -.32px; color: #d8d8d8; display: flex; justify-content: flex-end; white-space: nowrap; padding-right: 4px; }
.ff { margin-left: 17px; width: 14px; font: 8px/9px "DejaVu Sans", sans-serif; letter-spacing: -1px; color: #c4c4c4; }
.ptabs .sep { height: 9px; margin-right: 5px; background: #555; }
.prow { height: 16px; display: flex; justify-content: flex-end; align-items: center; padding-right: 2px; border-bottom: 1px solid #2d2d2d; }
.plist { height: 89px; display: flex; border-bottom: 1px solid #2a2a2a; }
.rows { flex: 1; }
.pr1 { height: 16px; display: flex; justify-content: flex-end; align-items: center; padding-right: 2px; }
.pr2 { height: 14px; background: #3a4760; overflow: hidden; display: flex; justify-content: flex-start; font: bold 7.500px/14px "Open Sans", sans-serif; color: #eee; }
.pr2 span { width: 33px; display: flex; justify-content: flex-end; white-space: nowrap; }
.psc, .lsc { width: 9px; background: #2e2e2e; display: flex; flex-direction: column; justify-content: space-between; align-items: center; padding: 4px 0 2px; }
.su { border: 3px solid transparent; border-bottom: 4px solid #777; border-top: 0; }
.sd { border: 3px solid transparent; border-top: 4px solid #777; border-bottom: 0; }
.pfoot { height: 14px; display: flex; align-items: center; padding-left: 43px; gap: 11px; border-bottom: 1px solid #252525; }
.pgrip { height: 6px; border-bottom: 1px solid #252525; padding-top: 1px; } .pgrip .grip { margin-left: 34px; }

.dock { width: 29px; background: #404040; border-left: 2px solid #232323; border-right: 2px solid #2b2b2b; }
.dock .strip { padding-right: 1px; }
.dgroup { border-bottom: 1px solid #282828; padding: 2px 0 2.300px; }
.dgroup .grip { margin: 0 0 2px 5px; }
.dgroup span { display: flex; width: 22px; height: 20.400px; margin-left: 2px; align-items: center; justify-content: center; }
.dgroup:nth-child(2) span { height: 19px; }
.dgroup span.on { background: #2a2a2a; }

.dialog { position: absolute; left: 479px; top: 109px; width: 498px; height: 402px; background: #3f3f3f; border-radius: 4px 4px 1px 1px; box-shadow: 0 12px 28px rgba(0,0,0,.65), 0 0 2px rgba(0,0,0,.6); display: flex; flex-direction: column; -webkit-text-stroke: .15px; }
.title { height: 16px; background: linear-gradient(#ececec, #cdcdcd); border-radius: 4px 4px 0 0; text-align: center; font-size: 10.300px; line-height: 17px; color: #444; border-bottom: 1px solid #a5a5a5; padding-right: 1px; -webkit-text-stroke: 0; }
.body { flex: 1; display: flex; padding: 11px 0 0 11px; align-items: flex-start; }
.cats { display: flex; height: 273px; width: 139px; }
.cats ul { width: 122px; margin: 0; padding: 0; list-style: none; border: 1px solid #c98546; }
.cats li { height: 11.850px; line-height: 11px; font-size: 6.850px; padding-left: 1px; border-bottom: 1px solid #2e2e2e; color: #dcdcdc; white-space: nowrap; }
.cats li:first-child { height: 11px; line-height: 10px; }
.cats .on { background: #3d4a66; color: #fff; }
.lsc { width: 9px; margin-left: 1px; background: #2d2d2d; }
.form { width: 348px; }
.name { display: flex; align-items: center; height: 16px; }
.name label { width: 93px; text-align: right; margin-right: 6px; }
.inp { width: 186px; height: 13px; background: #969696; border: 1px solid #808080; color: #1c1c1c; line-height: 12px; padding-left: 1px; font-size: 9.900px; }
.loc { width: 93px; text-align: right; font-size: 6.800px; height: 18px; line-height: 18px; }
h3 { margin: 0; font-size: 9.100px; font-weight: 400; line-height: 11px; height: 17px; }
hr { border: 0; height: 1px; background: #555; margin: 0 14px 0 0; }
.fields { padding-top: 9.500px; }
.row { display: flex; align-items: center; height: 18.500px; }
.row label { width: 57px; text-align: right; margin-right: 4px; white-space: nowrap; }
.row .l2 { width: 53px; margin-right: 4px; } .row .l2.near { width: 52px; margin-right: 5px; }
.row .sel { height: 13px; font-size: 9.400px; }
.row .spin { margin-right: 2px; height: 12px; }
.w150 { width: 150px; } .w75 { width: 76px; } .w87 { width: 87px; }
.h2r { margin: 6.500px 22px 0 7px; background: #4b4b4b; }
.checks { display: grid; grid-template-columns: 92px 74px 80px; grid-auto-rows: 18.500px; padding: 1px 0 0 37px; font-size: 9.250px; }
.checks span { display: flex; align-items: center; white-space: nowrap; }
.checks i { width: 7px; height: 7px; margin: 0 3px 0 0; background: linear-gradient(#2e2e2e 3px, #ddd 3px 4px, #2e2e2e 4px); }
.foot { height: 36px; display: flex; align-items: flex-start; padding: 7px 0 0 13px; }
.prev { display: flex; width: 328px; align-items: center; height: 12px; gap: 1px; }
.btn { width: 69px; height: 14px; background: linear-gradient(#666, #505050); border: 1px solid #303030; text-align: center; line-height: 13px; margin-right: 8px; }
.ok { box-shadow: 0 0 0 1px #2a2a2a; }
.cursor { position: absolute; left: 693px; top: 239px; }
</style>
